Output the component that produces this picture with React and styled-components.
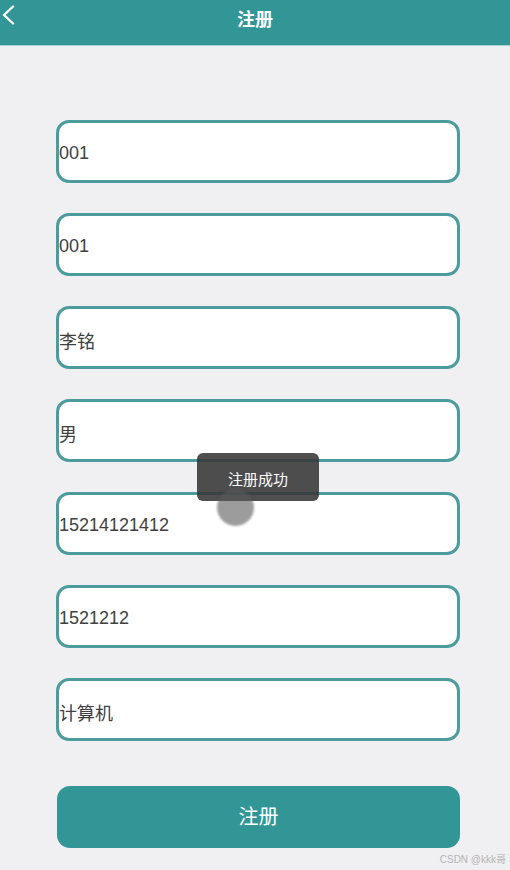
import React from 'react';
import styled, { createGlobalStyle } from 'styled-components';

const GlobalStyle = createGlobalStyle`
  html, body {
    margin: 0;
    padding: 0;
    background: #f0eff1;
  }
  body {
    font-family: "Liberation Sans", Arial, "Noto Sans CJK SC", sans-serif;
  }
`;

const fields = ['001', '001', '李铭', '男', '15214121412', '1521212', '计算机'];

const App = () => {
  return (
    <>
      <GlobalStyle />
      <Styled.Page>
        <Styled.Header>
          <Styled.Back aria-label="返回">
            <svg width="14" height="20" viewBox="0 0 14 20">
              <path d="M12 1.5 L3 10 L12 18.5" fill="none" stroke="#ffffff" strokeWidth="2.4" strokeLinecap="round" strokeLinejoin="round" />
            </svg>
          </Styled.Back>
          <Styled.Title>注册</Styled.Title>
        </Styled.Header>
        <Styled.Form>
          {fields.map((value, i) => (
            <Styled.Input key={i} defaultValue={value} />
          ))}
          <Styled.Submit>注册</Styled.Submit>
        </Styled.Form>
        <Styled.Toast>注册成功</Styled.Toast>
        <Styled.Touch />
        <Styled.Watermark>CSDN @kkk哥</Styled.Watermark>
      </Styled.Page>
    </>
  );
};

const Styled = {
  Page: styled.div`
    position: relative;
    width: 510px;
    height: 870px;
    overflow: hidden;
    background: #f0eff1;
  `,
  Header: styled.header`
    position: relative;
    height: 45px;
    display: flex;
    align-items: center;
    justify-content: center;
    background: #329696;
    border-bottom: 1px solid #a9d3d3;
  `,
  Back: styled.span`
    position: absolute;
    left: 1px;
    top: 5px;
    display: flex;
  `,
  Title: styled.h1`
    margin: 0 0 10px;
    color: #ffffff;
    font-size: 18px;
    font-weight: 700;
  `,
  Form: styled.div`
    display: flex;
    flex-direction: column;
    gap: 30px;
    padding: 74px 50px 0 56px;
  `,
  Input: styled.input`
    box-sizing: border-box;
    width: 404px;
    height: 63px;
    padding: 4px 0 0 0;
    border: 3px solid #4c9c9e;
    border-radius: 13px;
    background: #ffffff;
    color: #404040;
    font-family: "Liberation Sans", Arial, "Noto Sans CJK SC", sans-serif;
    font-size: 18px;
    outline: none;
  `,
  Submit: styled.button`
    box-sizing: border-box;
    width: 403px;
    height: 62px;
    margin: 15px 0 0 1px;
    padding-bottom: 4px;
    border: none;
    border-radius: 13px;
    background: #329696;
    color: #ffffff;
    font-family: "Noto Sans CJK SC", sans-serif;
    font-size: 20px;
  `,
  Toast: styled.div`
    position: absolute;
    left: 197px;
    top: 453px;
    width: 122px;
    height: 48px;
    box-sizing: border-box;
    padding-top: 3px;
    display: flex;
    align-items: center;
    justify-content: center;
    border-radius: 6px;
    background: rgba(55, 55, 55, 0.88);
    color: #ffffff;
    font-family: "Noto Sans CJK SC", sans-serif;
    font-size: 15px;
  `,
  Touch: styled.div`
    position: absolute;
    left: 217px;
    top: 489px;
    width: 37px;
    height: 37px;
    border-radius: 50%;
    background: rgba(90, 90, 90, 0.6);
    filter: blur(1px);
  `,
  Watermark: styled.div`
    position: absolute;
    right: 4px;
    bottom: 4px;
    color: #b4b4b4;
    font-size: 10px;
    font-family: "Liberation Sans", Arial, "Noto Sans CJK SC", sans-serif;
  `,
};

export default App;
